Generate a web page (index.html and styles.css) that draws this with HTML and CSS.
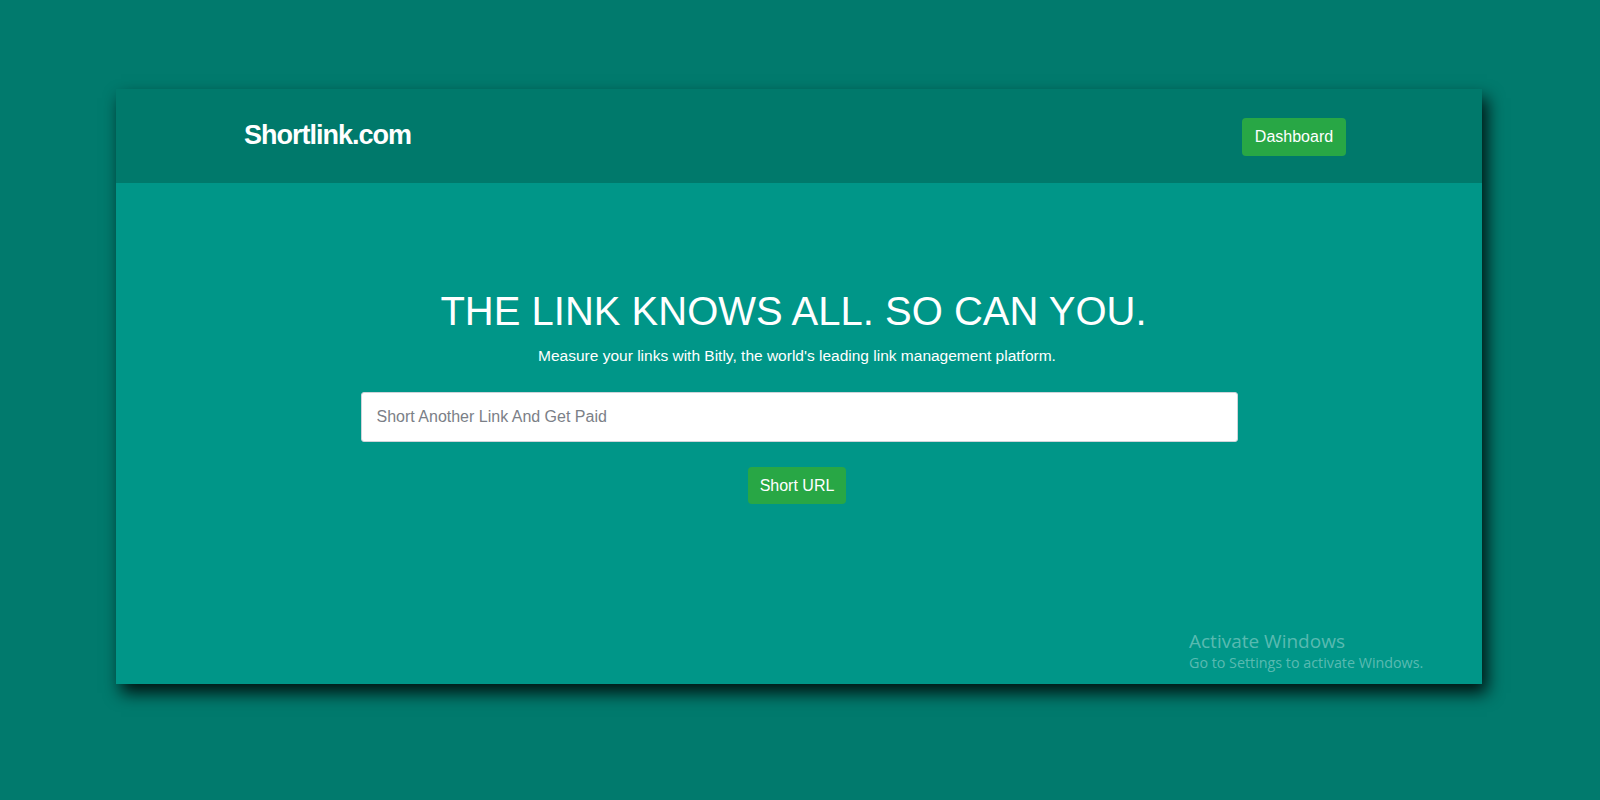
FILE: index.html
```html
<!DOCTYPE html>
<html>
<head>
<meta charset="utf-8">
<link rel="stylesheet" href="styles.css">
</head>
<body>
<div class="page">
  <div class="card">
    <header class="header">
      <div class="logo">Shortlink.com</div>
      <a class="btn btn-dash">Dashboard</a>
    </header>
    <main class="hero">
      <h1 class="title">THE LINK KNOWS ALL. SO CAN YOU.</h1>
      <p class="subtitle">Measure your links with Bitly, the world's leading link management platform.</p>
      <input class="url-input" type="text" placeholder="Short Another Link And Get Paid">
      <a class="btn btn-short">Short URL</a>
      <div class="activate">
        <div class="act-title">Activate Windows</div>
        <div class="act-sub">Go to Settings to activate Windows.</div>
      </div>
    </main>
  </div>
</div>
</body>
</html>
```
FILE: styles.css
```css
html, body {
  margin: 0;
  padding: 0;
  height: 100%;
}
body {
  background: #017a6d;
  font-family: "Liberation Sans", Arial, sans-serif;
}
.page {
  padding: 89px 0 0 116px;
}
.card {
  width: 1366px;
  height: 595px;
  display: flex;
  flex-direction: column;
  box-shadow: 5px 9px 16px rgba(0, 0, 0, 0.85);
}
.header {
  height: 94px;
  background: #00796b;
  display: flex;
  align-items: center;
  justify-content: space-between;
  padding: 0 136px 0 128px;
  flex-shrink: 0;
}
.logo {
  color: #fff;
  font-weight: bold;
  font-size: 27px;
  letter-spacing: -1px;
  margin-top: -2px;
}
.btn {
  display: inline-block;
  background: #28a745;
  color: #fff;
  font-size: 16px;
  border-radius: 4px;
  cursor: pointer;
  box-sizing: border-box;
  text-align: center;
}
.btn-dash {
  width: 104px;
  height: 38px;
  line-height: 38px;
  margin-top: 1px;
}
.hero {
  flex: 1;
  background: #009688;
  display: flex;
  flex-direction: column;
  align-items: center;
  position: relative;
  padding-top: 104px;
}
.title {
  margin: 0;
  color: #fff;
  font-weight: normal;
  font-size: 40px;
  line-height: 48px;
  margin-left: -11px;
}
.subtitle {
  margin: 11px 0 0 -4px;
  color: #fff;
  font-size: 15.5px;
  line-height: 20px;
}
.url-input {
  margin-top: 26px;
  width: 877px;
  height: 50px;
  box-sizing: border-box;
  border: 1px solid #ced4da;
  border-radius: 3px;
  padding: 0 15px;
  font-family: "Liberation Sans", Arial, sans-serif;
  font-size: 16px;
  color: #495057;
  background: #fff;
  outline: none;
}
.url-input::placeholder {
  color: #7b8087;
}
.btn-short {
  margin-top: 25px;
  width: 98px;
  height: 37px;
  line-height: 37px;
  margin-left: -4px;
}
.activate {
  position: absolute;
  left: 1073px;
  top: 446px;
  color: rgba(255, 255, 255, 0.36);
  font-family: "Open Sans", "Noto Sans", sans-serif;
}
.act-title {
  font-size: 19px;
  line-height: 24px;
}
.act-sub {
  font-size: 14.3px;
  line-height: 20px;
}
```
